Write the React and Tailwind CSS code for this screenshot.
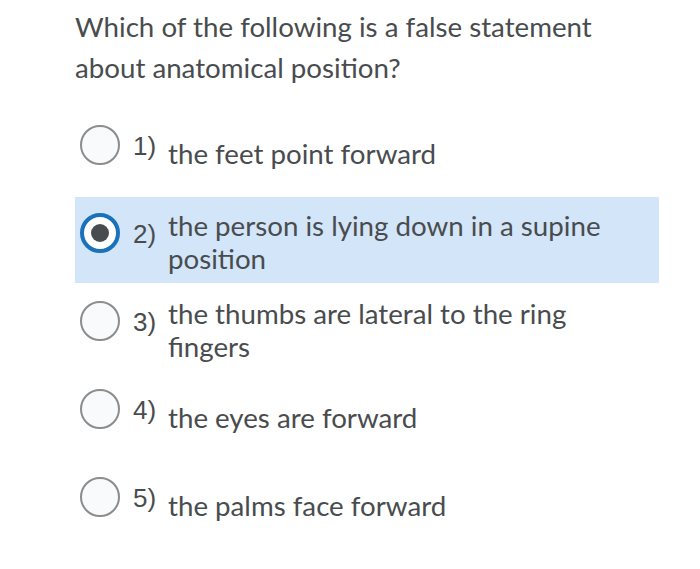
const options = [
  { n: "1)", text: "the feet point forward" },
  { n: "2)", text: "the person is lying down in a supine position", selected: true },
  { n: "3)", text: "the thumbs are lateral to the ring fingers" },
  { n: "4)", text: "the eyes are forward" },
  { n: "5)", text: "the palms face forward" },
];

const Radio = ({ selected }) =>
  selected ? (
    <div className="w-[40px] h-[40px] flex-shrink-0 rounded-full border-[4px] border-[#1a73ba] bg-white flex items-center justify-center">
      <div className="w-[18px] h-[18px] rounded-full bg-[#494c4e]" />
    </div>
  ) : (
    <div className="w-[40px] h-[40px] flex-shrink-0 rounded-full border-2 border-[#8a8c8e] bg-[#f9fafb]" />
  );

export default function App() {
  return (
    <div className="w-[700px] h-[569px] bg-white text-[#494c4e] font-['Lato',sans-serif]">
      <div className="pl-[75px] pt-[6px] w-[640px] text-[27.7px] leading-[41px]">
        Which of the following is a false statement about anatomical position?
      </div>

      <div className="mt-[21px] ml-[75px] w-[584px] flex flex-col gap-[2px]">
        {options.map((o) => (
          <div
            key={o.n}
            className={`h-[86px] flex items-center pl-[5px] pr-[29px] ${o.selected ? "bg-[#d3e5f8]" : ""}`}
          >
            <div className="mb-[14px]">
              <Radio selected={o.selected} />
            </div>
            <span className="ml-[13px] w-[35px] mb-[12px] text-[26px] leading-[30px] font-['Liberation_Sans',Arial,sans-serif]">
              {o.n}
            </span>
            <div className="flex-1 mt-[3px] text-[27.7px] leading-[33px]">{o.text}</div>
          </div>
        ))}
      </div>
    </div>
  );
}
